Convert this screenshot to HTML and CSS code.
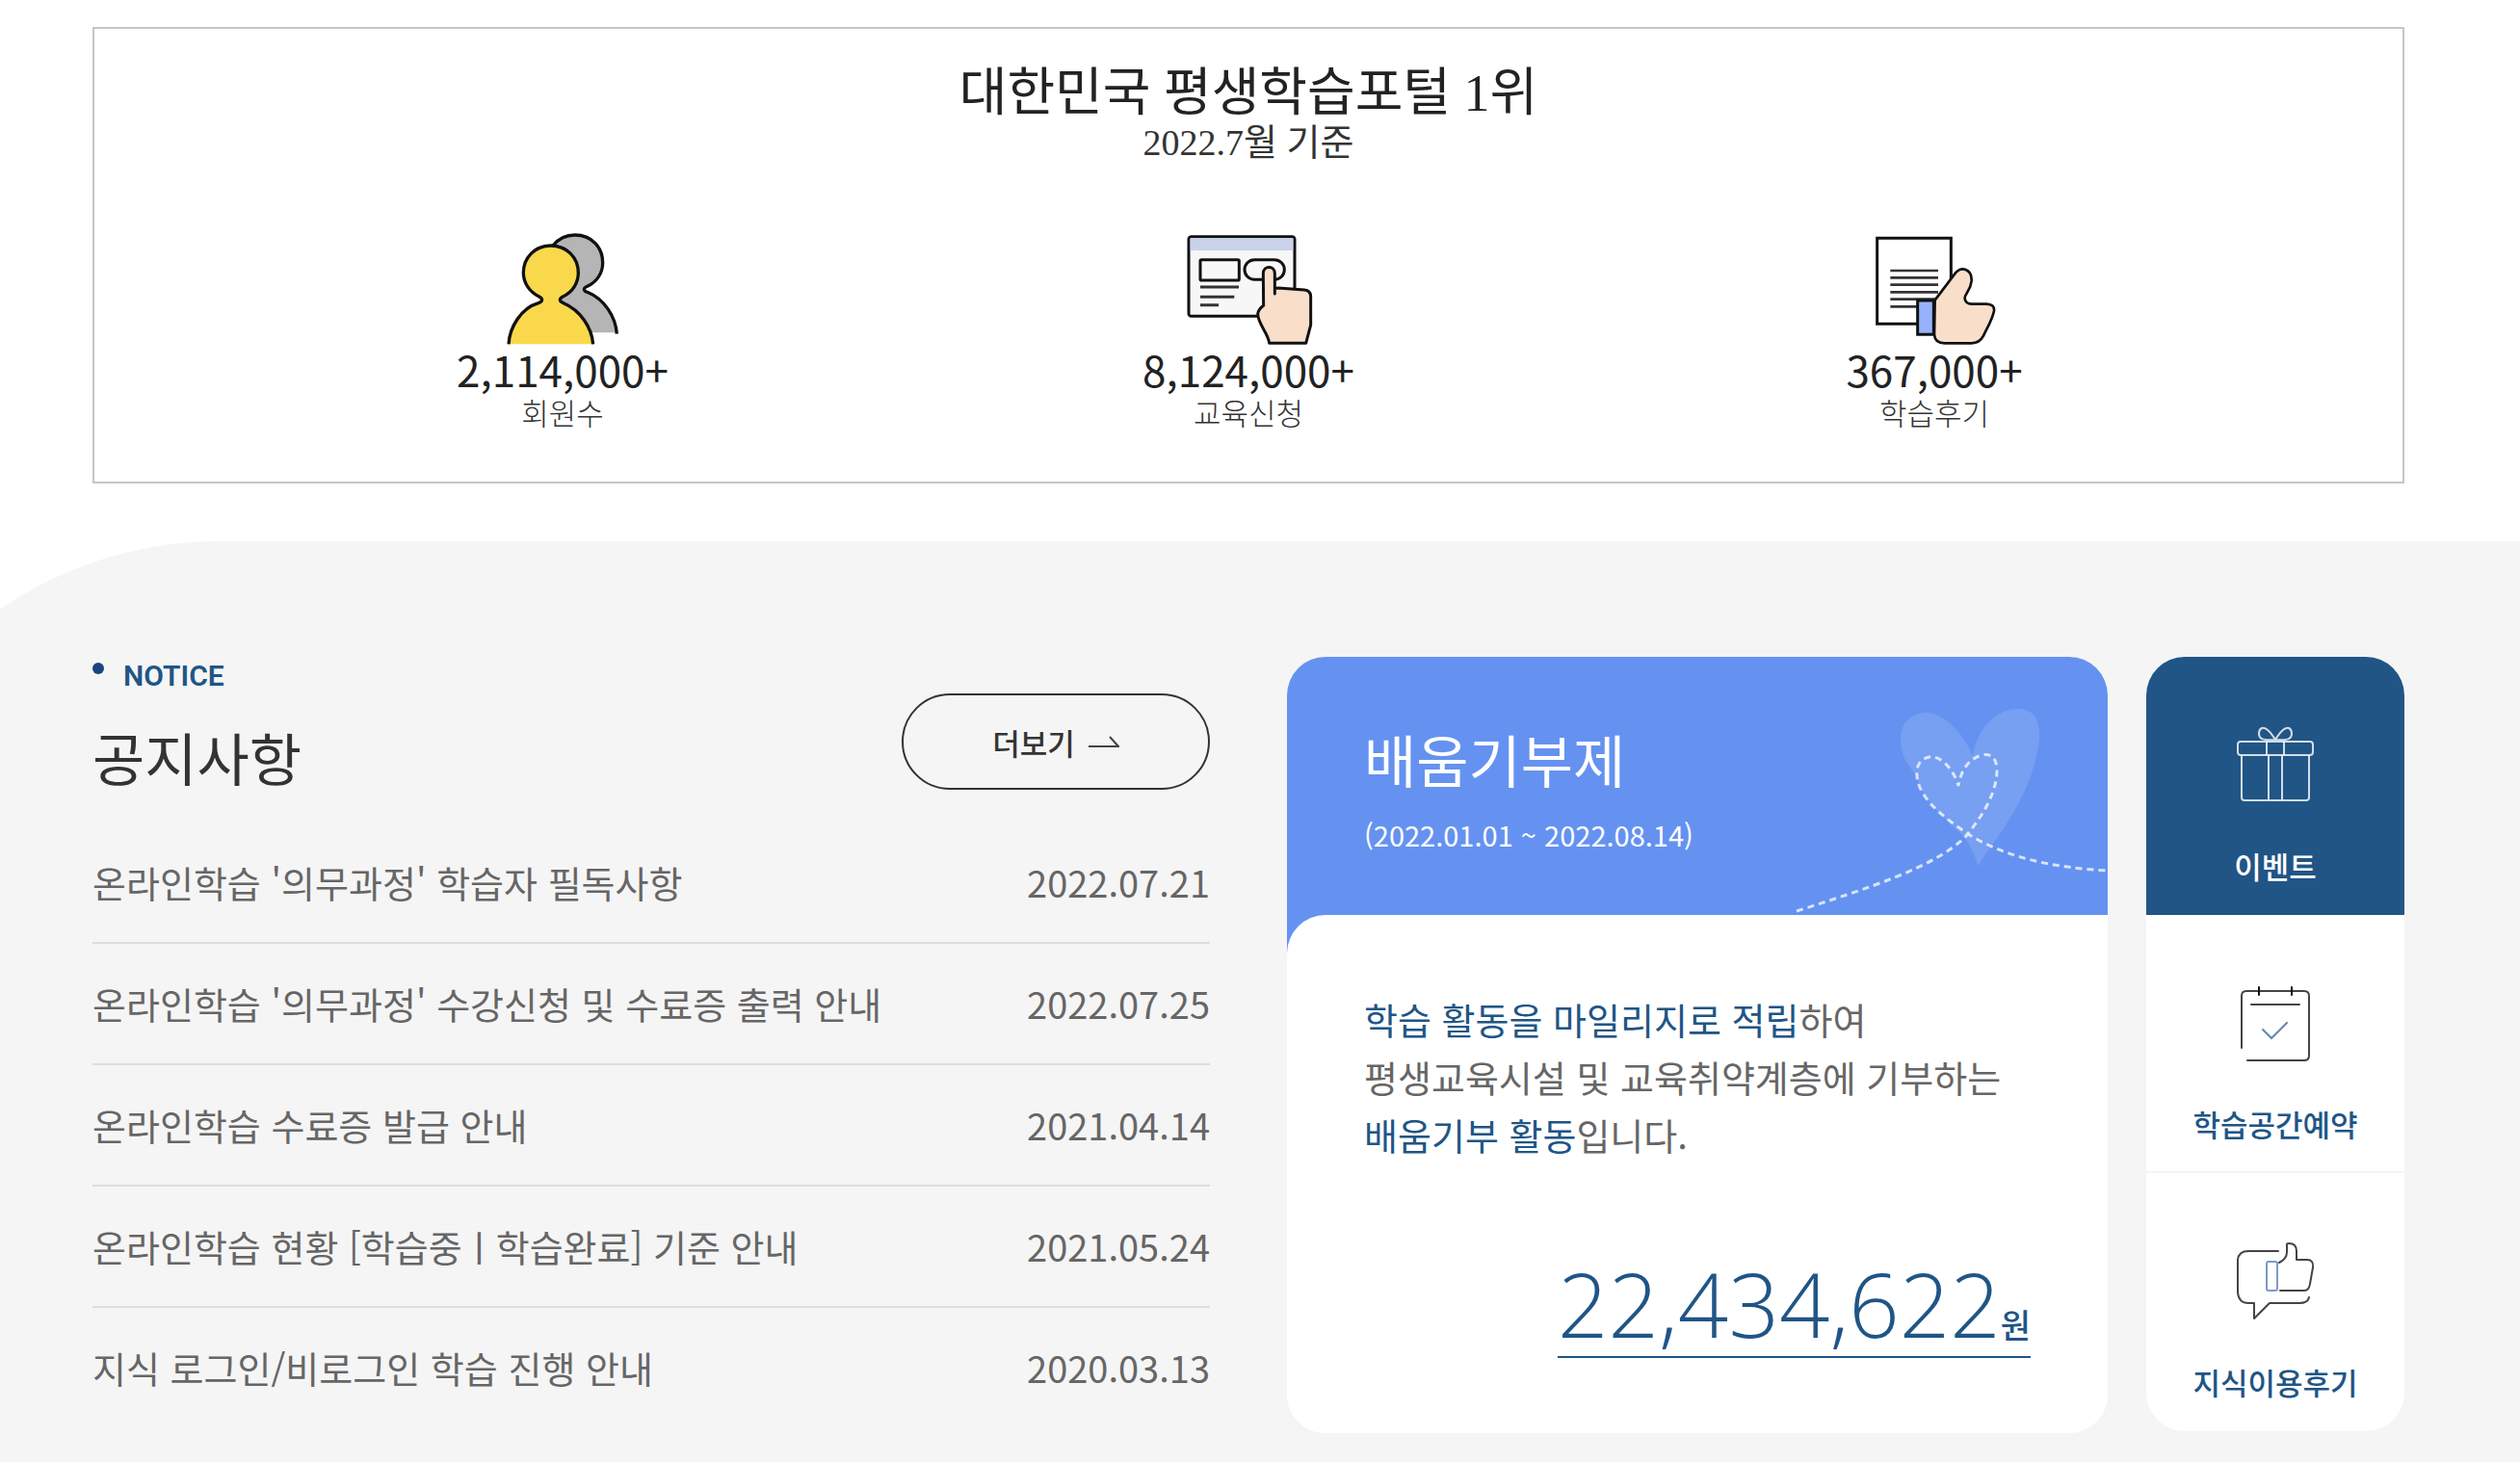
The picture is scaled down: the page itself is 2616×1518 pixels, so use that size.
FILE: index.html
```html
<!DOCTYPE html>
<html lang="ko">
<head>
  <meta charset="UTF-8" />
  <meta name="viewport" content="width=device-width, initial-scale=1" />
  <title>평생학습포털</title>
  <link rel="stylesheet" href="styles.css">
</head>
<body>

<section class="summary">
  <h2>대한민국 평생학습포털 1위</h2>
  <p class="summary-date">2022.7월 기준</p>
  <ul class="summary-list">
    <li>
      <svg class="summary-icon" viewBox="225 60 420 360" aria-hidden="true" stroke="#111" stroke-width="10" stroke-linecap="butt" stroke-linejoin="round">
        <path d="M405 105 C425 80 448 72 474 72 C525 72 560 110 560 158 C560 192 540 218 512 232 C498 238 500 246 512 250 C565 272 600 325 604 376 L420 376Z" fill="#b5b5b5" stroke="none" />
        <path d="M405 105 C425 80 448 72 474 72 C525 72 560 110 560 158 C560 192 540 218 512 232 C498 238 500 246 512 250 C565 272 600 325 604 380" fill="none" />
        <path d="M267 412 C270 360 305 300 360 284 C374 279 374 270 362 264 C333 250 313 222 313 190 C313 142 350 105 398 105 C447 105 484 142 484 190 C484 222 466 250 436 264 C424 270 424 279 438 284 C490 306 526 360 530 412" fill="#f9d84b" />
      </svg>
      <strong>2,114,000+</strong>
      <span>회원수</span>
    </li>
    <li>
      <svg class="summary-icon" viewBox="228 60 420 360" aria-hidden="true" stroke="#111" stroke-width="9" stroke-linejoin="round">
        <rect x="252" y="77" width="330" height="248" rx="8" fill="#f7f7f7" />
        <path d="M257 82h320v38h-320z" fill="#c9d2ea" stroke="none" />
        <rect x="288" y="149" width="121" height="64" rx="4" fill="none" />
        <rect x="426" y="149" width="124" height="62" rx="31" fill="none" />
        <path d="M288 234h120M288 265h106M288 290h57" stroke="#333" />
        <path d="M503 409 C500 378 468 350 467 318 C469 305 476 298 485 292 L484 192 C484 166 520 166 520 192 L520 255 L520 240 Q522 237 530 237 L612 243 Q632 245 632 264 L632 352 L617 409Z" fill="#f9dfca" />
      </svg>
      <strong>8,124,000+</strong>
      <span>교육신청</span>
    </li>
    <li>
      <svg class="summary-icon" viewBox="204 60 420 360" aria-hidden="true" stroke="#111" stroke-width="9">
        <path d="M236 82h230v267h-230z" fill="#fff" />
        <path d="M277 183h149M277 205h149M277 227h149M277 250h149M277 272h149M277 295h90" stroke="#333" stroke-width="8" />
        <path d="M416 275 L480 190 C500 167 532 180 530 215 C527 248 507 254 509 271 Q512 287 530 287 L577 287 Q602 288 600 308 C595 335 578 362 567 386 Q555 409 530 409 L446 409 Q416 409 414 382Z" fill="#f9dfca" stroke-width="8" stroke-linejoin="round" />
        <path d="M362 276h50v106h-50z" fill="#97b2fa" />
      </svg>
      <strong>367,000+</strong>
      <span>학습후기</span>
    </li>
  </ul>
</section>

<main class="board">
  <section class="notice">
    <div class="notice-head">
      <div>
        <p class="notice-label">NOTICE</p>
        <h2>공지사항</h2>
      </div>
      <button type="button" class="btn-more">더보기
        <svg viewBox="0 0 32 12" width="32" height="12" aria-hidden="true" fill="none" stroke="#444" stroke-width="2"><path d="M0 11h31L22 1" /></svg>
      </button>
    </div>
    <ul class="notice-list">
      <li><a href="#">온라인학습 '의무과정' 학습자 필독사항</a><time>2022.07.21</time></li>
      <li><a href="#">온라인학습 '의무과정' 수강신청 및 수료증 출력 안내</a><time>2022.07.25</time></li>
      <li><a href="#">온라인학습 수료증 발급 안내</a><time>2021.04.14</time></li>
      <li><a href="#">온라인학습 현황 [학습중ㅣ학습완료] 기준 안내</a><time>2021.05.24</time></li>
      <li><a href="#">지식 로그인/비로그인 학습 진행 안내</a><time>2020.03.13</time></li>
    </ul>
  </section>

  <section class="donation">
    <div class="donation-head">
      <div>
        <h2>배움기부제</h2>
        <p>(2022.01.01 ~ 2022.08.14)</p>
      </div>
      <svg class="heart" viewBox="540 60 328 220" aria-hidden="true" fill="none">
        <path d="M734 230 C738 215 790 165 797 97 C798 76 790 66 775 66 C750 66 731 90 728 115 C718 90 695 68 677 70 C660 72 652 84 653 100 C654 118 662 126 670 136 C674 160 700 180 720 200 Q728 212 734 230Z" fill="#fff" fill-opacity=".12" />
        <path d="M545 276 C620 252 690 230 721 198 C740 175 754 150 753 127 C752 116 745 112 738 114 C725 117 716 128 713 146 C708 128 694 114 683 116 C672 118 669 127 670 136 C672 160 700 180 723 196 C765 222 815 231 868 234" stroke="#fff" stroke-opacity=".75" stroke-width="3" stroke-dasharray="7 5" />
      </svg>
    </div>
    <div class="donation-body">
      <p><em>학습 활동을 마일리지로 적립</em>하여<br>평생교육시설 및 교육취약계층에 기부하는<br><em>배움기부 활동</em>입니다.</p>
      <div class="amount"><strong>22,434,622</strong><span>원</span></div>
    </div>
  </section>

  <nav class="quick">
    <a href="#" class="on">
      <svg viewBox="0 0 80 80" aria-hidden="true" fill="none" stroke="#fff" stroke-opacity=".8" stroke-width="2">
        <rect x="1" y="16" width="78" height="14" rx="3" />
        <path d="M5 30v44q0 3 3 3h64q3 0 3-3v-44M31 16v14M49 16v14M33 30v47M47 30v47" />
        <path d="M40 14C35 6 30 1 26 2c-4 2-4 9 0 11 3 2 9 1 14 1zM40 14c5-8 10-13 14-12 4 2 4 9 0 11-3 2-9 1-14 1z" />
      </svg>
      <span>이벤트</span>
    </a>
    <a href="#">
      <svg viewBox="0 0 80 80" aria-hidden="true" fill="none" stroke="#444" stroke-width="2" stroke-linecap="round">
        <path d="M5 66V12q0-5 5-5h60q5 0 5 5v62q0 5-5 5H11M15 21h50" />
        <path d="M23 3v8M57 3v8" stroke="#111" />
        <path d="M27 47l9 9 16-16" stroke="#5f87ad" />
      </svg>
      <span>학습공간예약</span>
    </a>
    <a href="#">
      <svg viewBox="0 0 80 80" aria-hidden="true" fill="none" stroke="#444" stroke-width="2" stroke-linecap="round" stroke-linejoin="round">
        <path d="M43 9H12Q2 9 1 18v34q1 11 11 11h6v16l16-16h31q9 0 10-6" />
        <path d="M44 21c6-3 8-7 8-11V2q0-1 2-1 8 0 8 8v9h11q7 0 6 8l-3 17q-1 8-8 7H45" />
        <rect x="31" y="20" width="11" height="30" rx="2" stroke="#7d9cc4" />
      </svg>
      <span>지식이용후기</span>
    </a>
  </nav>
</main>

</body>
</html>
```

FILE: styles.css
```css
* {
  box-sizing: border-box;
  margin: 0;
  padding: 0;
}
body {
  font-family: 'Noto Sans CJK KR', sans-serif;
  background-color: #fff;
  color: #222;
  overflow-x: hidden;
}
ul {
  list-style: none;
}
a {
  color: inherit;
  text-decoration: none;
}
h2 {
  font-size: 59px;
  font-weight: 400;
}

/* summary box */
.summary {
  margin: 28px 120px 60px 96px;
  padding: 36px 130px 50px;
  border: 2px solid #c6c6c6;
  text-align: center;
}
.summary h2 {
  font-family: 'Liberation Serif', 'Noto Sans CJK KR', serif;
  font-size: 54px;
  line-height: 62px;
}
.summary-date {
  font-family: 'Liberation Serif', 'Noto Sans CJK KR', serif;
  font-size: 38px;
  line-height: 40px;
  color: #333;
}
.summary-list {
  display: flex;
  margin-top: 72px;
}
.summary-list li {
  flex: 1;
  display: flex;
  flex-direction: column;
  align-items: center;
}
.summary-icon {
  width: 140px;
  height: 120px;
}
.summary-list strong {
  font-size: 44px;
  font-weight: 400;
  line-height: 46px;
}
.summary-list span {
  font-size: 31px;
  font-weight: 300;
  line-height: 44px;
  color: #333;
}

/* grey board with the rounded corner running off the left side */
.board {
  display: flex;
  margin-left: -173px;
  padding: 120px 120px 30px 269px;
  background-color: #f5f5f5;
  border-top-left-radius: 400px;
}
.notice {
  flex: 1160;
  margin-right: 80px;
  padding-bottom: 6px;
}
.notice-head {
  display: flex;
  justify-content: space-between;
  align-items: flex-end;
  height: 138px;
}
.notice-head h2 {
  line-height: 68px;
  color: #333;
}
.notice-label {
  display: flex;
  gap: 20px;
  font-family: Roboto, sans-serif;
  font-size: 30px;
  font-weight: 600;
  line-height: 40px;
  margin-bottom: 30px;
  color: #205586;
}
.notice-label::before {
  content: '';
  width: 12px;
  height: 12px;
  margin-top: 6px;
  border-radius: 50%;
  background-color: #194583;
}
.btn-more {
  display: flex;
  justify-content: center;
  align-items: center;
  gap: 14px;
  width: 320px;
  height: 100px;
  border: 2px solid #333;
  border-radius: 50px;
  background: none;
  font-family: inherit;
  font-size: 31px;
  font-weight: 500;
  color: #333;
  cursor: pointer;
}
.notice-list {
  margin-top: 34px;
}
.notice-list li {
  display: flex;
  justify-content: space-between;
  border-bottom: 2px solid #ddd;
  font-size: 38px;
  line-height: 124px;
  color: #666;
}
.notice-list li:last-child {
  border-bottom: none;
}

/* donation card, blue shows behind the white panel's rounded corner */
.donation {
  flex: 852;
  display: flex;
  flex-direction: column;
  margin-right: 40px;
  border-radius: 40px;
  background: linear-gradient(#6592f1 50%, #fff 50%);
  overflow: hidden;
}
.donation-head {
  display: flex;
  justify-content: space-between;
  height: 268px;
  padding-left: 80px;
  color: #fff;
}
.donation-head h2 {
  margin-top: 70px;
  line-height: 72px;
}
.donation-head p {
  margin-top: 20px;
  font-size: 29px;
  line-height: 44px;
}
.heart {
  width: 328px;
  height: 220px;
  margin-top: 48px;
}
.donation-body {
  flex: 1;
  display: flex;
  flex-direction: column;
  justify-content: space-between;
  align-items: flex-end;
  padding: 78px 80px;
  border-top-left-radius: 40px;
  background-color: #fff;
}
.donation-body p {
  align-self: stretch;
  font-size: 38px;
  line-height: 60px;
  color: #666;
  white-space: nowrap;
}
.donation-body em {
  font-style: normal;
  color: #205586;
}
.amount {
  display: flex;
  align-items: baseline;
  border-bottom: 2px solid #205586;
  line-height: 66px;
  color: #205586;
}
.amount strong {
  font-family: 'Open Sans', sans-serif;
  font-size: 92px;
  font-weight: 300;
}
.amount span {
  font-size: 34px;
  font-weight: 500;
}

/* quick links */
.quick {
  flex: 268;
  align-self: flex-start;
  border-radius: 40px;
  background-color: #fff;
  overflow: hidden;
}
.quick a {
  display: flex;
  flex-direction: column;
  align-items: center;
  height: 268px;
  padding-top: 72px;
  border-bottom: 2px solid #f5f5f5;
  font-size: 31px;
  font-weight: 500;
  line-height: 44px;
  color: #205586;
}
.quick a.on {
  background-color: #205586;
  border-color: #205586;
  color: #fff;
}
.quick a:last-child {
  border-bottom: none;
}
.quick svg {
  width: 80px;
  height: 80px;
  margin-bottom: 43px;
  overflow: visible;
}
```
